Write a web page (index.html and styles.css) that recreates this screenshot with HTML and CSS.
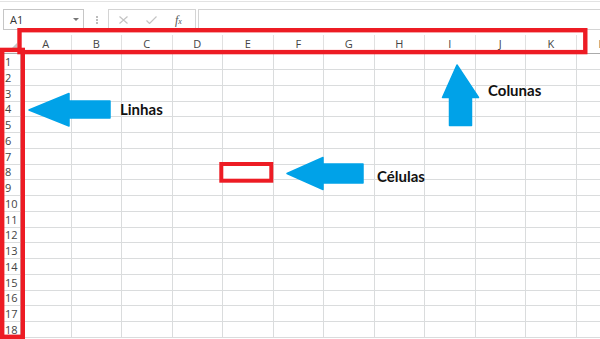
FILE: index.html
```html
<!DOCTYPE html>
<html lang="pt">
<head>
  <meta charset="UTF-8">
  <meta content="width=device-width, initial-scale=1.0" name="viewport">
  <title>Linhas, colunas e células</title>
  <link rel="stylesheet" href="styles.css">
</head>
<body>
<div class="edge"></div>

<div class="formula-bar">
  <div class="name-box"><span>A1</span><span class="drop"></span></div>
  <span class="grip"></span>
  <div class="buttons">
    <svg class="cancel" width="9" height="8" viewBox="0 0 9 8"><path d="M0.5 0.5l8 7M8.5 0.5l-8 7"/></svg>
    <svg class="enter" width="11" height="8" viewBox="0 0 11 8"><path d="M0.5 4.5l3 3 7-7"/></svg>
    <span class="fx">f<small>x</small></span>
  </div>
  <div class="formula-input"></div>
</div>

<main class="sheet">
  <div class="row head">
    <span class="corner"></span>
    <span>A</span><span>B</span><span>C</span><span>D</span><span>E</span><span>F</span>
    <span>G</span><span>H</span><span>I</span><span>J</span><span>K</span><span>L</span>
  </div>
  <div class="row"><span class="num">1</span><i></i><i></i><i></i><i></i><i></i><i></i><i></i><i></i><i></i><i></i><i></i><i></i></div>
  <div class="row"><span class="num">2</span><i></i><i></i><i></i><i></i><i></i><i></i><i></i><i></i><i></i><i></i><i></i><i></i></div>
  <div class="row"><span class="num">3</span><i></i><i></i><i></i><i></i><i></i><i></i><i></i><i></i><i></i><i></i><i></i><i></i></div>
  <div class="row"><span class="num">4</span><i></i><i></i><i></i><i></i><i></i><i></i><i></i><i></i><i></i><i></i><i></i><i></i></div>
  <div class="row"><span class="num">5</span><i></i><i></i><i></i><i></i><i></i><i></i><i></i><i></i><i></i><i></i><i></i><i></i></div>
  <div class="row"><span class="num">6</span><i></i><i></i><i></i><i></i><i></i><i></i><i></i><i></i><i></i><i></i><i></i><i></i></div>
  <div class="row"><span class="num">7</span><i></i><i></i><i></i><i></i><i></i><i></i><i></i><i></i><i></i><i></i><i></i><i></i></div>
  <div class="row"><span class="num">8</span><i></i><i></i><i></i><i></i><i></i><i></i><i></i><i></i><i></i><i></i><i></i><i></i></div>
  <div class="row"><span class="num">9</span><i></i><i></i><i></i><i></i><i></i><i></i><i></i><i></i><i></i><i></i><i></i><i></i></div>
  <div class="row"><span class="num">10</span><i></i><i></i><i></i><i></i><i></i><i></i><i></i><i></i><i></i><i></i><i></i><i></i></div>
  <div class="row"><span class="num">11</span><i></i><i></i><i></i><i></i><i></i><i></i><i></i><i></i><i></i><i></i><i></i><i></i></div>
  <div class="row"><span class="num">12</span><i></i><i></i><i></i><i></i><i></i><i></i><i></i><i></i><i></i><i></i><i></i><i></i></div>
  <div class="row"><span class="num">13</span><i></i><i></i><i></i><i></i><i></i><i></i><i></i><i></i><i></i><i></i><i></i><i></i></div>
  <div class="row"><span class="num">14</span><i></i><i></i><i></i><i></i><i></i><i></i><i></i><i></i><i></i><i></i><i></i><i></i></div>
  <div class="row"><span class="num">15</span><i></i><i></i><i></i><i></i><i></i><i></i><i></i><i></i><i></i><i></i><i></i><i></i></div>
  <div class="row"><span class="num">16</span><i></i><i></i><i></i><i></i><i></i><i></i><i></i><i></i><i></i><i></i><i></i><i></i></div>
  <div class="row"><span class="num">17</span><i></i><i></i><i></i><i></i><i></i><i></i><i></i><i></i><i></i><i></i><i></i><i></i></div>
  <div class="row"><span class="num">18</span><i></i><i></i><i></i><i></i><i></i><i></i><i></i><i></i><i></i><i></i><i></i><i></i></div>
</main>

<!-- anotações por cima da planilha -->
<svg class="notes" width="600" height="339" viewBox="0 0 600 339">
  <g fill="none" stroke="#ed1c24">
    <rect x="19.5" y="30.2" width="565.8" height="21.9" stroke-width="4.4"/>
    <rect x="2.2" y="49.9" width="20.6" height="286.9" stroke-width="4.4"/>
    <rect x="221.3" y="164" width="50" height="16.7" stroke-width="4"/>
  </g>
  <g fill="#00a2e8" stroke="#00a2e8" stroke-width="1.5" stroke-linejoin="round">
    <polygon points="29,110 69,93.5 69,101 110,101 110,118 69,118 69,126"/>
    <polygon points="287,173.5 323,157.5 323,164 363,164 363,183 323,183 323,189.5"/>
    <polygon points="457,65 478.5,97.5 471.5,97.5 471.5,125.5 449.5,125.5 449.5,97.5 442.5,97.5"/>
  </g>
</svg>
<p class="label linhas">Linhas</p>
<p class="label colunas">Colunas</p>
<p class="label celulas">Células</p>
</body>
</html>
```

FILE: styles.css
```css
* {
  box-sizing: border-box;
}

body {
  background: #fff;
  font-family: "Open Sans", "Noto Sans", sans-serif;
  height: 339px;
  margin: 0;
  overflow: hidden;
  position: relative;
  width: 600px;
}

.edge {
  background: #e3e3e3;
  height: 1px;
  margin-top: 1px;
}

.formula-bar {
  align-items: center;
  display: flex;
  height: 21px;
  margin-top: 7px;
  padding-left: 3px;

  & .name-box {
    align-items: center;
    border: 1px solid #c6c6c6;
    color: #333;
    display: flex;
    font-size: 11px;
    height: 21px;
    justify-content: space-between;
    padding: 0 4px 0 6px;
    width: 81px;
  }

  & .drop {
    border-left: 3px solid transparent;
    border-right: 3px solid transparent;
    border-top: 3px solid #777;
  }

  & .grip {
    background: repeating-linear-gradient(#bdbdbd 0 2px, transparent 2px 3px);
    height: 8px;
    margin-left: 12px;
    width: 2px;
  }

  & .buttons {
    align-items: center;
    border: 1px solid #d4d4d4;
    display: flex;
    gap: 18px;
    height: 21px;
    margin-left: 10px;
    padding-left: 10px;
    width: 88px;
  }

  & .buttons svg {
    fill: none;
    stroke: #c4c4c4;
    stroke-width: 1.2;
  }

  & .fx {
    color: #555;
    font-family: "Liberation Serif", serif;
    font-size: 12px;
    font-style: italic;
    line-height: 1;

    & small {
      font-size: 8px;
    }
  }

  & .formula-input {
    border: 1px solid #d4d4d4;
    border-right: none;
    flex: 1;
    height: 21px;
    margin-left: 2px;
  }
}

.sheet {
  margin-top: 5px;
}

.row {
  display: grid;
  grid-template-columns: 21px repeat(12, 50.5px);
  height: 15.75px;

  & > * {
    border-bottom: 1px solid #dadcdd;
    border-right: 1px solid #dadcdd;
  }

  & .num {
    border-right-color: #c8c8c8;
    color: #444;
    font-size: 11px;
    line-height: 14px;
    padding: 1px 0 0 5px;
  }
}

.row.head {
  height: 19px;

  & span {
    border-bottom-color: #ababab;
    border-right-color: #e1e1e1;
    color: #444;
    font-size: 11px;
    line-height: 18px;
    text-align: center;
  }

  & .corner {
    align-items: flex-end;
    border-right-color: #c8c8c8;
    display: flex;
    justify-content: flex-end;
    padding: 0 3px 5px 0;

    &::after {
      border-bottom: 5px solid #c4c4c4;
      border-left: 5px solid transparent;
      content: "";
    }
  }
}

.notes {
  left: 0;
  pointer-events: none;
  position: absolute;
  top: 0;
}

.label {
  color: #111;
  font-family: Lato, "Open Sans", sans-serif;
  font-size: 15px;
  font-weight: 700;
  line-height: 1;
  margin: 0;
  position: absolute;
}

.linhas {
  left: 120px;
  top: 102px;
}

.colunas {
  left: 488px;
  top: 83px;
}

.celulas {
  left: 377px;
  top: 169px;
}
```
